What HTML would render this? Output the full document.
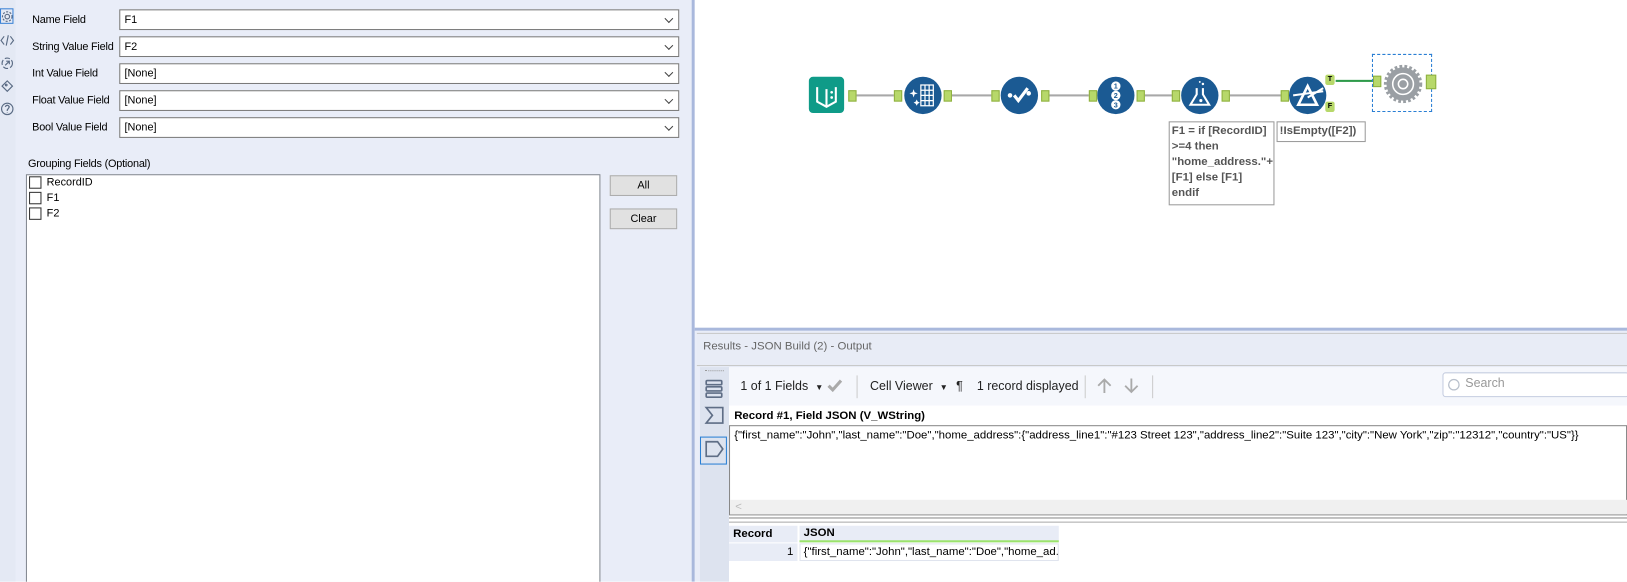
<!DOCTYPE html>
<html><head><meta charset="utf-8"><style>
html,body{margin:0;padding:0;width:1627px;height:582px;overflow:hidden;background:#fff;font-family:"Liberation Sans",Arial,sans-serif;}
#w{position:absolute;left:0;top:0;width:1569px;height:561px;transform:scale(1.037);transform-origin:0 0;overflow:hidden;}
.a{position:absolute;}
.lbl{position:absolute;left:31px;font-size:10.5px;color:#000;letter-spacing:-0.2px;}
.dd{position:absolute;left:115px;width:534px;height:18px;background:#fff;border:1px solid #7a7a7a;font-size:10.5px;line-height:18px;padding-left:4px;box-sizing:content-box;}
.dd:after{content:"";position:absolute;right:6px;top:5px;width:5px;height:5px;border-right:1px solid #444;border-bottom:1px solid #444;transform:rotate(45deg);}
.btn{position:absolute;left:588px;width:63px;height:18px;background:#e1e1e1;border:1px solid #adadad;font-size:10.5px;text-align:center;line-height:18px;}
.cb{position:absolute;left:28px;width:10px;height:10px;border:1px solid #333;background:#fff;}
.cbt{position:absolute;left:45px;font-size:10.5px;}
.tool{position:absolute;width:36px;height:36px;border-radius:50%;background:#1b5a93;top:74px;}
.ln{position:absolute;height:2px;background:#a8a8a8;top:91px;}
.cn{position:absolute;width:6px;height:9px;background:#b7d86a;border:1px solid #8fb040;top:87px;}
.ann{position:absolute;border:1px solid #9a9a9a;background:#fff;font-size:11px;color:#555;line-height:15px;padding:1px 2px;font-weight:bold;}
.tb{position:absolute;top:365px;font-size:12px;color:#222;}
</style></head><body><div id="w">
<div class="a" style="left:0;top:0;width:667px;height:561px;background:#e9edf8;"></div>
<div class="a" style="left:0;top:0;width:15px;height:561px;background:#e4e9f4;"></div>
<div class="a" style="left:0;top:8px;width:13px;height:15px;border:1px solid #3b82d6;box-sizing:border-box;"></div>
<svg class="a" style="left:0;top:8px" width="14" height="110" viewBox="0 0 14 110" fill="none" stroke="#5a6b84" stroke-width="1.1">
<circle cx="7" cy="8" r="2.2"/><circle cx="7" cy="8" r="4.6" stroke-dasharray="2 1.4"/>
<path d="M4 27 L1 31 L4 35 M10 27 L13 31 L10 35 M8 26 L6 36"/>
<circle cx="7" cy="53" r="5" stroke-dasharray="5 2"/><path d="M5 55 L9 51 M6 51 H9 V54"/>
<path d="M2 75 L7 70 L12 75 L7 80 Z"/><circle cx="6" cy="74" r="0.8"/>
<circle cx="7" cy="97" r="5.5"/><path d="M5 95 Q7 92 9 95 Q8 97 7 98 V99 M7 100.5 V101"/>
</svg>
<div class="lbl" style="top:13px">Name Field</div>
<div class="lbl" style="top:39px">String Value Field</div>
<div class="lbl" style="top:65px">Int Value Field</div>
<div class="lbl" style="top:91px">Float Value Field</div>
<div class="lbl" style="top:117px">Bool Value Field</div>
<div class="dd" style="top:9px">F1</div>
<div class="dd" style="top:35px">F2</div>
<div class="dd" style="top:61px">[None]</div>
<div class="dd" style="top:87px">[None]</div>
<div class="dd" style="top:113px">[None]</div>
<div class="lbl" style="left:27px;top:152px;">Grouping Fields (Optional)</div>
<div class="a" style="left:25px;top:168px;width:552px;height:400px;background:#fff;border:1px solid #828790;"></div>
<div class="cb" style="top:170px"></div><div class="cbt" style="top:170px">RecordID</div>
<div class="cb" style="top:185px"></div><div class="cbt" style="top:185px">F1</div>
<div class="cb" style="top:200px"></div><div class="cbt" style="top:200px">F2</div>
<div class="btn" style="top:169px">All</div>
<div class="btn" style="top:201px">Clear</div>
<div class="a" style="left:667px;top:0;width:3px;height:561px;background:#a9b8dc;"></div>
<div class="a" style="left:670px;top:0;width:899px;height:316px;background:#fff;"></div>
<div class="ln" style="left:826px;width:36px"></div>
<div class="ln" style="left:918px;width:38px"></div>
<div class="ln" style="left:1012px;width:38px"></div>
<div class="ln" style="left:1104px;width:28px"></div>
<div class="ln" style="left:1186px;width:50px"></div>
<div class="a" style="left:1288px;top:77px;width:38px;height:2px;background:#2e9a4a"></div>
<div class="a" style="left:780px;top:74px;width:34px;height:35px;background:#0f9b88;border-radius:4px;"></div>
<svg class="a" style="left:780px;top:74px" width="34" height="35"><path d="M8 10 V24 L17 29 L26 24 V10 M17 12 V28" stroke="#fff" stroke-width="2" fill="none"/><circle cx="22" cy="15" r="1.3" fill="#fff"/><circle cx="22" cy="20" r="1.3" fill="#fff"/></svg>
<div class="tool" style="left:872px"></div>
<svg class="a" style="left:872px;top:74px" width="36" height="36"><path d="M16 8 H28 V28 H16 Z M16 13 H28 M16 18 H28 M16 23 H28 M20 8 V28 M24 8 V28" stroke="#fff" stroke-width="1.2" fill="none"/><path d="M9 12 L10 15 L13 16 L10 17 L9 20 L8 17 L5 16 L8 15Z M12 22 L13 24 L15 25 L13 26 L12 28 L11 26 L9 25 L11 24Z" fill="#fff"/></svg>
<div class="tool" style="left:965px"></div>
<svg class="a" style="left:965px;top:74px" width="36" height="36"><circle cx="9" cy="18" r="2.2" fill="#fff"/><circle cx="27" cy="16" r="2.2" fill="#fff"/><path d="M13 18 L17 23 L26 11" stroke="#fff" stroke-width="3" fill="none"/></svg>
<div class="tool" style="left:1058px"></div>
<svg class="a" style="left:1058px;top:74px" width="36" height="36" font-family="Liberation Sans" font-size="7" font-weight="bold" text-anchor="middle"><circle cx="18" cy="9" r="4.5" fill="#fff"/><circle cx="18" cy="18" r="4.5" fill="#fff"/><circle cx="18" cy="27" r="4.5" fill="#fff"/><text x="18" y="11.5" fill="#1b5a93">1</text><text x="18" y="20.5" fill="#1b5a93">2</text><text x="18" y="29.5" fill="#1b5a93">3</text></svg>
<div class="tool" style="left:1139px"></div>
<svg class="a" style="left:1139px;top:74px" width="36" height="36"><path d="M15 11 V17 L9 27 H27 L21 17 V11" stroke="#fff" stroke-width="2" fill="none"/><circle cx="19" cy="23" r="1.5" fill="#fff"/><circle cx="21" cy="7" r="1.2" fill="#fff"/><circle cx="18" cy="5" r="0.9" fill="#fff"/></svg>
<div class="tool" style="left:1243px"></div>
<svg class="a" style="left:1243px;top:74px" width="36" height="36"><path d="M9 27 L18 9 L27 27 Z" stroke="#fff" stroke-width="2.5" fill="none"/><path d="M4 18 L33 14 M18 20 L33 11" stroke="#fff" stroke-width="2"/></svg>
<div class="a" style="left:1323px;top:52px;width:58px;height:56px;border:1px dashed #2a7fd4;box-sizing:border-box;"></div>
<svg class="a" style="left:1332px;top:60px" width="42" height="42"><circle cx="21" cy="21" r="16" fill="#9a9fa4" stroke="#9a9fa4" stroke-width="5" stroke-dasharray="2.5 2"/><circle cx="21" cy="21" r="10" fill="none" stroke="#fff" stroke-width="1.5"/><circle cx="21" cy="21" r="4.5" fill="none" stroke="#fff" stroke-width="1.5"/></svg>
<div class="cn" style="left:818px"></div><div class="cn" style="left:862px"></div>
<div class="cn" style="left:910px"></div><div class="cn" style="left:956px"></div>
<div class="cn" style="left:1004px"></div><div class="cn" style="left:1050px"></div>
<div class="cn" style="left:1096px"></div><div class="cn" style="left:1130px"></div>
<div class="cn" style="left:1178px"></div><div class="cn" style="left:1235px"></div>
<div class="cn" style="left:1324px;top:73px"></div>
<div class="cn" style="left:1375px;top:72px;width:8px;height:12px"></div>
<div class="a" style="left:1278px;top:72px;width:9px;height:10px;background:#b7d86a;border-radius:2px;font-size:7px;font-weight:bold;text-align:center;line-height:10px">T</div>
<div class="a" style="left:1278px;top:98px;width:9px;height:10px;background:#b7d86a;border-radius:2px;font-size:7px;font-weight:bold;text-align:center;line-height:10px">F</div>
<div class="ann" style="left:1127px;top:117px;width:96px;height:77px;">F1 = if [RecordID]<br>&gt;=4 then<br>"home_address."+<br>[F1] else [F1]<br>endif</div>
<div class="ann" style="left:1231px;top:117px;width:80px;height:16px;">!IsEmpty([F2])</div>
<div class="a" style="left:670px;top:316px;width:899px;height:3px;background:#a9b8dc;"></div>
<div class="a" style="left:670px;top:319px;width:899px;height:242px;background:#e9edf8;"></div>
<div class="a" style="left:672px;top:321px;width:897px;height:30px;background:#e8ecf6;border-top:1px solid #c8c8c8;border-bottom:1px solid #c8c8c8;"></div>
<div class="a" style="left:678px;top:328px;font-size:11px;color:#666">Results - JSON Build (2) - Output</div>
<div class="a" style="left:675px;top:354px;width:28px;height:207px;background:#dde3ef;"></div>
<div class="a" style="left:680px;top:357px;width:18px;border-top:1px dotted #999"></div>
<svg class="a" style="left:675px;top:362px" width="28" height="90" fill="none" stroke="#5f6e86" stroke-width="1.6"><rect x="6" y="5" width="15" height="4" rx="1"/><rect x="6" y="11" width="15" height="4" rx="1"/><rect x="6" y="17" width="15" height="4" rx="1"/><path d="M6 31 H22 V46 H6 L12 38.5 Z"/><path d="M6 64 H17 L22 71 L17 78 H6 Z"/></svg>
<div class="a" style="left:675px;top:421px;width:26px;height:27px;border:1px solid #2a7fd4;box-sizing:border-box"></div>
<div class="a" style="left:703px;top:354px;width:866px;height:37px;background:#f5f7fc;"></div>
<div class="tb" style="left:714px">1 of 1 Fields&nbsp; <span style="font-size:8px">▼</span></div>
<svg class="a" style="left:797px;top:365px" width="16" height="14"><path d="M2 7 L6 11 L14 2" stroke="#aaa" stroke-width="3" fill="none"/></svg>
<div class="a" style="left:826px;top:362px;width:1px;height:22px;background:#ccc"></div>
<div class="tb" style="left:839px">Cell Viewer&nbsp; <span style="font-size:8px">▼</span></div>
<div class="tb" style="left:922px">¶</div>
<div class="tb" style="left:942px">1 record displayed</div>
<div class="a" style="left:1046px;top:362px;width:1px;height:22px;background:#ccc"></div>
<svg class="a" style="left:1056px;top:363px" width="46" height="18" fill="none" stroke="#aaa" stroke-width="1.8"><path d="M9 16 V3 M3 9 L9 3 L15 9 M35 2 V15 M29 9 L35 15 L41 9"/></svg>
<div class="a" style="left:1111px;top:362px;width:1px;height:22px;background:#ccc"></div>
<div class="a" style="left:1391px;top:359px;width:178px;height:22px;background:#fff;border:1px solid #c5cde0;border-radius:3px;"></div>
<svg class="a" style="left:1395px;top:364px" width="14" height="14"><circle cx="7" cy="7" r="5" stroke="#b8c0cc" fill="none" stroke-width="1.2"/></svg>
<div class="a" style="left:1413px;top:362px;font-size:12px;color:#999">Search</div>
<div class="a" style="left:703px;top:391px;width:866px;height:170px;background:#fff;"></div>
<div class="a" style="left:708px;top:395px;font-size:11px;font-weight:bold">Record #1, Field JSON (V_WString)</div>
<div class="a" style="left:703px;top:410px;width:866px;height:87px;border:1px solid #888;box-sizing:border-box;"></div>
<div class="a" style="left:708px;top:414px;font-size:11px;white-space:nowrap">{"first_name":"John","last_name":"Doe","home_address":{"address_line1":"#123 Street 123","address_line2":"Suite 123","city":"New York","zip":"12312","country":"US"}}</div>
<div class="a" style="left:704px;top:482px;width:865px;height:14px;background:#f0f0f0;color:#bbb;font-size:11px;padding-left:5px;line-height:14px">&lt;</div>
<div class="a" style="left:703px;top:499px;width:866px;height:3px;border-top:1px solid #888;border-bottom:1px solid #aaa;"></div>
<div class="a" style="left:703px;top:507px;width:66px;height:16px;background:#e8ecf6;font-size:11px;font-weight:bold;line-height:16px;padding-left:4px;box-sizing:border-box">Record</div>
<div class="a" style="left:771px;top:507px;width:250px;height:16px;background:#e8ecf6;font-size:11px;font-weight:bold;line-height:15px;padding-left:4px;box-sizing:border-box;border-bottom:2px solid #9be36c">JSON</div>
<div class="a" style="left:703px;top:524px;width:66px;height:17px;background:#e8ecf6;font-size:11px;line-height:17px;text-align:right;padding-right:4px;box-sizing:border-box">1</div>
<div class="a" style="left:771px;top:524px;width:250px;height:17px;border:1px solid #e0e4ee;box-sizing:border-box;font-size:11px;line-height:15px;padding-left:3px;white-space:nowrap;overflow:hidden">{"first_name":"John","last_name":"Doe","home_ad...</div>
</div></body></html>
